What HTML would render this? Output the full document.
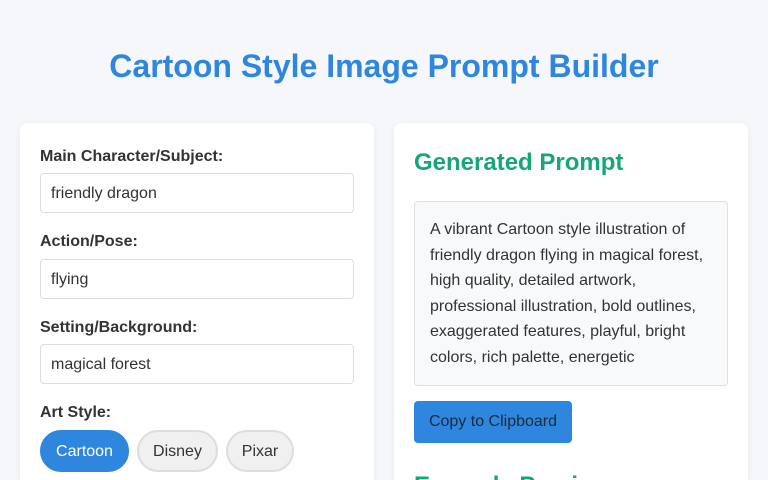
<!DOCTYPE html>
<html style="width:768px;height:480px;overflow:hidden"><head><style>
*{box-sizing:border-box;margin:0;padding:0}
body{width:768px;height:480px;overflow:hidden;background:#f5f7fa;font-family:"Liberation Sans",sans-serif;color:#333;position:relative}
h1{position:absolute;top:48px;left:0;width:768px;text-align:center;font-size:32px;color:#2e86de;font-weight:bold}
.card{position:absolute;top:123px;width:354px;height:357px;background:#fff;border-radius:8px 8px 0 0;box-shadow:0 2px 8px rgba(0,0,0,.06);padding:20px;overflow:hidden}
label{display:block;font-weight:bold;font-size:16px;position:absolute;left:20px}
.in{position:absolute;left:20px;width:314px;height:40px;border:1px solid #ddd;border-radius:4px;padding:0 10px;line-height:39px;font-size:16px;color:#333}
.pill{position:absolute;top:307px;height:42px;border-radius:21px;font-size:16px;line-height:39px;text-align:center;border:2px solid #ddd;background:#f0f0f0;color:#333}
h2{position:absolute;left:20px;font-size:24px;color:#17a57a;font-weight:bold}
.box{position:absolute;left:20px;top:78px;width:314px;height:185px;background:#f8f9fa;border:1px solid #e0e0e0;border-radius:4px;padding:15px 15px;font-size:16px;line-height:25.6px}
.btn{position:absolute;left:20px;top:278px;width:158px;height:42px;background:#2e86de;border-radius:4px;font-size:16px;line-height:42px;text-align:center;color:#1e2a3a}
</style></head><body>
<h1>Cartoon Style Image Prompt Builder</h1>
<div class="card" style="left:20px">
<label style="top:25px">Main Character/Subject:</label>
<div class="in" style="top:50px">friendly dragon</div>
<label style="top:110px">Action/Pose:</label>
<div class="in" style="top:136px">flying</div>
<label style="top:196px">Setting/Background:</label>
<div class="in" style="top:221px">magical forest</div>
<label style="top:281px">Art Style:</label>
<div class="pill" style="left:20px;width:89px;background:#2e86de;border-color:#2e86de;color:#fff">Cartoon</div>
<div class="pill" style="left:117px;width:81px">Disney</div>
<div class="pill" style="left:206px;width:68px">Pixar</div>
</div>
<div class="card" style="left:394px">
<h2 style="top:26px">Generated Prompt</h2>
<div class="box">A vibrant Cartoon style illustration of friendly dragon flying in magical forest, high quality, detailed artwork, professional illustration, bold outlines, exaggerated features, playful, bright colors, rich palette, energetic</div>
<div class="btn">Copy to Clipboard</div>
<h2 style="top:349px">Example Previews</h2>
</div>
</body></html>
